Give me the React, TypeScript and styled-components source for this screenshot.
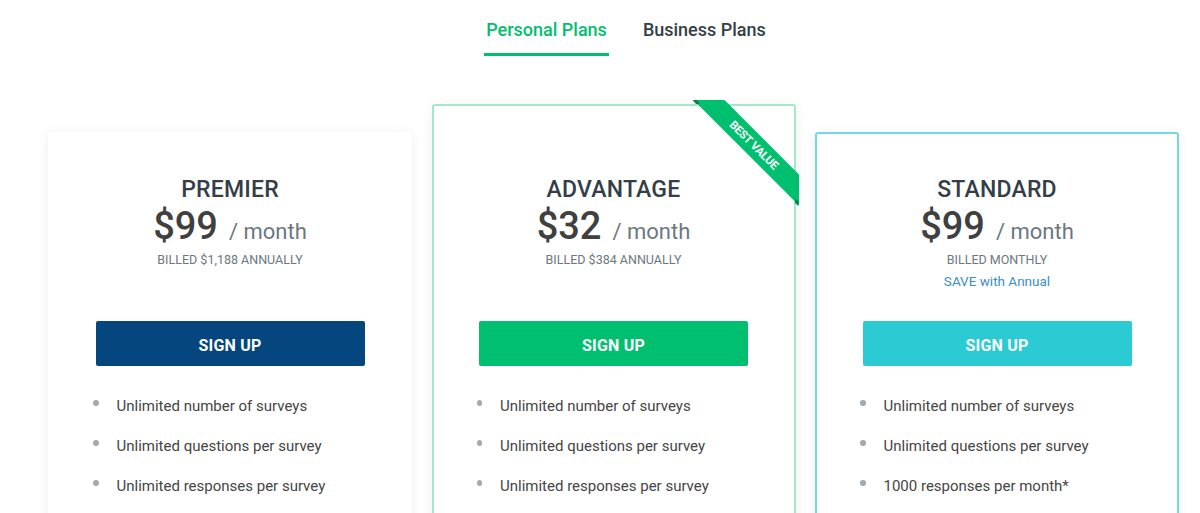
import React from "react";
import styled, { createGlobalStyle } from "styled-components";

const GlobalStyle = createGlobalStyle`
  html, body {
    margin: 0;
    padding: 0;
    background: #ffffff;
    overflow: hidden;
  }
  body {
    font-family: Roboto, "Liberation Sans", Arial, sans-serif;
    -webkit-font-smoothing: antialiased;
  }
  * { box-sizing: border-box; }
`;

const Page = styled.div`
  width: 1200px;
  height: 513px;
  overflow: hidden;
  background: #ffffff;
`;

const Tabs = styled.nav`
  display: flex;
  justify-content: center;
  gap: 32px;
  padding-left: 52px;
`;

const Tab = styled.a<{ $active?: boolean }>`
  display: block;
  padding: 19px 2px 12px;
  font-size: 18px;
  line-height: 22px;
  font-weight: 500;
  color: ${(p) => (p.$active ? "#00bf6f" : "#333e48")};
  border-bottom: 3px solid ${(p) => (p.$active ? "#00bf6f" : "transparent")};
  text-decoration: none;
  cursor: pointer;
`;

const Cards = styled.div`
  display: flex;
  align-items: flex-start;
  gap: 19.5px;
  padding-left: 48px;
  margin-top: 48px;
`;

const Card = styled.div<{ $border: string; $featured?: boolean }>`
  position: relative;
  width: 364px;
  min-height: 520px;
  flex: none;
  background: #ffffff;
  border: 2px solid ${(p) => p.$border};
  border-radius: 3px;
  box-shadow: 0 2px 12px rgba(0, 0, 0, 0.07);
  margin-top: ${(p) => (p.$featured ? "0" : "28px")};
  padding-top: ${(p) => (p.$featured ? "69.5px" : "41.5px")};
`;

const Header = styled.div`
  height: 145.5px;
  display: flex;
  flex-direction: column;
  align-items: center;
  text-align: center;
`;

const PlanName = styled.h2`
  margin: 0;
  font-size: 23px;
  line-height: 28px;
  font-weight: 500;
  color: #333e48;
  letter-spacing: 0.2px;
`;

const PriceRow = styled.div`
  margin-top: 0;
  display: flex;
  align-items: baseline;
  gap: 11px;
  line-height: 44px;
`;

const Amount = styled.span`
  font-size: 38px;
  font-weight: 500;
  color: #404040;
`;

const Period = styled.span`
  font-size: 22px;
  font-weight: 400;
  color: #6b787f;
`;

const Billed = styled.div`
  margin-top: -2px;
  font-size: 12.5px;
  line-height: 16px;
  color: #6b787f;
`;

const SaveLink = styled.a`
  margin-top: 4px;
  font-size: 13.5px;
  line-height: 18px;
  color: #3a8fc2;
  text-decoration: none;
  cursor: pointer;
`;

const SignUp = styled.button<{ $bg: string }>`
  display: block;
  width: 269px;
  height: 45px;
  margin: 0 auto;
  padding: 4px 0 0;
  border: none;
  border-radius: 2px;
  background: ${(p) => p.$bg};
  color: #ffffff;
  font-family: inherit;
  font-size: 16px;
  font-weight: 700;
  letter-spacing: 0.2px;
  cursor: pointer;
`;

const Features = styled.ul`
  list-style: none;
  margin: 30px 0 0;
  padding: 0 0 0 43px;
  display: flex;
  flex-direction: column;
  gap: 20px;
`;

const Feature = styled.li`
  display: flex;
  align-items: center;
  gap: 18px;
  font-size: 15px;
  line-height: 20px;
  color: #454545;
`;

const Dot = styled.span`
  width: 5.5px;
  height: 5.5px;
  border-radius: 50%;
  background: #a2aaaf;
  flex: none;
  transform: translateY(-3px);
`;

const RibbonWrap = styled.div`
  position: absolute;
  top: -6px;
  right: -5px;
  width: 107px;
  height: 107px;
  overflow: hidden;
  z-index: 2;
  pointer-events: none;
`;

const RibbonBand = styled.div`
  position: absolute;
  left: -18px;
  top: 33.5px;
  width: 160px;
  height: 22px;
  background: #00bf6f;
  transform: rotate(45deg);
  color: #ffffff;
  font-size: 11.5px;
  font-weight: 700;
  line-height: 22px;
  text-align: center;
  letter-spacing: -0.2px;
`;

const FoldTop = styled.span`
  position: absolute;
  left: 1px;
  top: 0;
  width: 7px;
  height: 4px;
  background: #00874f;
  clip-path: polygon(0 0, 70% 0, 100% 100%, 50% 100%);
  z-index: 3;
`;

const FoldBottom = styled.span`
  position: absolute;
  right: 0;
  top: 98px;
  width: 4px;
  height: 8px;
  background: #00874f;
  clip-path: polygon(0 0, 100% 40%, 100% 100%, 0 55%);
  z-index: 3;
`;

type Plan = {
  name: string;
  amount: string;
  billed: string;
  save?: string;
  button: string;
  border: string;
  featured?: boolean;
  features: string[];
};

const plans: Plan[] = [
  {
    name: "PREMIER",
    amount: "$99",
    billed: "BILLED $1,188 ANNUALLY",
    button: "#05467e",
    border: "transparent",
    features: [
      "Unlimited number of surveys",
      "Unlimited questions per survey",
      "Unlimited responses per survey",
    ],
  },
  {
    name: "ADVANTAGE",
    amount: "$32",
    billed: "BILLED $384 ANNUALLY",
    button: "#00bf6f",
    border: "#a3e8cb",
    featured: true,
    features: [
      "Unlimited number of surveys",
      "Unlimited questions per survey",
      "Unlimited responses per survey",
    ],
  },
  {
    name: "STANDARD",
    amount: "$99",
    billed: "BILLED MONTHLY",
    save: "SAVE with Annual",
    button: "#2ccbd3",
    border: "#72d9df",
    features: [
      "Unlimited number of surveys",
      "Unlimited questions per survey",
      "1000 responses per month*",
    ],
  },
];

export default function App() {
  return (
    <Page>
      <GlobalStyle />
      <Tabs>
        <Tab $active>Personal Plans</Tab>
        <Tab>Business Plans</Tab>
      </Tabs>
      <Cards>
        {plans.map((plan) => (
          <Card key={plan.name} $border={plan.border} $featured={plan.featured}>
            {plan.featured && (
              <RibbonWrap>
                <RibbonBand>BEST VALUE</RibbonBand>
                <FoldTop />
                <FoldBottom />
              </RibbonWrap>
            )}
            <Header>
              <PlanName>{plan.name}</PlanName>
              <PriceRow>
                <Amount>{plan.amount}</Amount>
                <Period>/ month</Period>
              </PriceRow>
              <Billed>{plan.billed}</Billed>
              {plan.save && <SaveLink>{plan.save}</SaveLink>}
            </Header>
            <SignUp $bg={plan.button}>SIGN UP</SignUp>
            <Features>
              {plan.features.map((f) => (
                <Feature key={f}>
                  <Dot />
                  {f}
                </Feature>
              ))}
            </Features>
          </Card>
        ))}
      </Cards>
    </Page>
  );
}
